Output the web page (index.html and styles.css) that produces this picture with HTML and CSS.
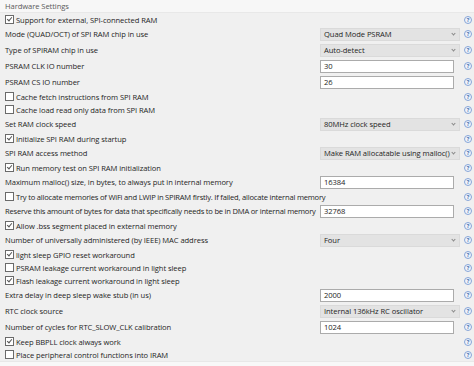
FILE: index.html
```html
<!DOCTYPE html>
<html lang="en">
<head>
  <meta charset="UTF-8" />
  <title>Hardware Settings</title>
  <link rel="stylesheet" href="styles.css">
</head>
<body>
  <div class="panel">
    <div class="header">Hardware Settings</div>

    <div class="row check"><label><span class="box on"></span>Support for external, SPI-connected RAM</label><span class="help">?</span></div>
    <div class="row field"><label>Mode (QUAD/OCT) of SPI RAM chip in use</label><div class="select">Quad Mode PSRAM</div><span class="help">?</span></div>
    <div class="row field"><label>Type of SPIRAM chip in use</label><div class="select">Auto-detect</div><span class="help">?</span></div>
    <div class="row field"><label>PSRAM CLK IO number</label><div class="input">30</div><span class="help">?</span></div>
    <div class="row field"><label>PSRAM CS IO number</label><div class="input">26</div><span class="help">?</span></div>
    <div class="row check"><label><span class="box"></span>Cache fetch instructions from SPI RAM</label><span class="help">?</span></div>
    <div class="row check"><label><span class="box"></span>Cache load read only data from SPI RAM</label><span class="help">?</span></div>
    <div class="row field"><label>Set RAM clock speed</label><div class="select">80MHz clock speed</div><span class="help">?</span></div>
    <div class="row check"><label><span class="box on"></span>Initialize SPI RAM during startup</label><span class="help">?</span></div>
    <div class="row field"><label>SPI RAM access method</label><div class="select">Make RAM allocatable using malloc()</div><span class="help">?</span></div>
    <div class="row check"><label><span class="box on"></span>Run memory test on SPI RAM initialization</label><span class="help">?</span></div>
    <div class="row field"><label>Maximum malloc() size, in bytes, to always put in internal memory</label><div class="input">16384</div><span class="help">?</span></div>
    <div class="row check"><label class="tight"><span class="box"></span>Try to allocate memories of WiFi and LWIP in SPIRAM firstly. If failed, allocate internal memory</label><span class="help">?</span></div>
    <div class="row field"><label class="tight">Reserve this amount of bytes for data that specifically needs to be in DMA or internal memory</label><div class="input">32768</div><span class="help">?</span></div>
    <div class="row check"><label><span class="box on"></span>Allow .bss segment placed in external memory</label><span class="help">?</span></div>
    <div class="row field"><label>Number of universally administered (by IEEE) MAC address</label><div class="select">Four</div><span class="help">?</span></div>
    <div class="row check"><label><span class="box on"></span>light sleep GPIO reset workaround</label><span class="help">?</span></div>
    <div class="row check"><label><span class="box"></span>PSRAM leakage current workaround in light sleep</label><span class="help">?</span></div>
    <div class="row check"><label><span class="box on"></span>Flash leakage current workaround in light sleep</label><span class="help">?</span></div>
    <div class="row field"><label>Extra delay in deep sleep wake stub (in us)</label><div class="input">2000</div><span class="help">?</span></div>
    <div class="row field"><label>RTC clock source</label><div class="select">Internal 136kHz RC oscillator</div><span class="help">?</span></div>
    <div class="row field"><label>Number of cycles for RTC_SLOW_CLK calibration</label><div class="input">1024</div><span class="help">?</span></div>
    <div class="row check"><label><span class="box on"></span>Keep BBPLL clock always work</label><span class="help">?</span></div>
    <div class="row check"><label><span class="box"></span>Place peripheral control functions into IRAM</label><span class="help">?</span></div>

    <div class="footer"></div>
  </div>
</body>
</html>
```
FILE: styles.css
```css
body {
  margin: 0;
  background: #f0f0f0;
  font-family: 'Open Sans', sans-serif;
  font-size: 7.6px;
  letter-spacing: -0.08px;
  color: #1e1e1e;
  overflow: hidden;
}

.panel {
  width: 474px;
  height: 366px;
  display: flex;
  flex-direction: column;
}

.header {
  height: 13px;
  line-height: 12px;
  padding-left: 5px;
  color: #5a5a5a;
  background: #f7f7f7;
  box-sizing: border-box;
  border-bottom: 1px solid #e8e8e8;
}

.row {
  display: flex;
  align-items: center;
  padding-left: 5px;
}

.row.check { height: 13px; }
.row.field { height: 16px; }

.row label {
  flex: 1;
  display: flex;
  align-items: center;
  white-space: nowrap;
  min-width: 0;
}

.row label.tight {
  letter-spacing: -0.22px;
}

.box {
  width: 7px;
  height: 7px;
  border: 1px solid #6a6a6a;
  background: #fff;
  margin-right: 2px;
  position: relative;
  flex: none;
}

.box.on::after {
  content: "";
  position: absolute;
  left: 2px;
  top: 0;
  width: 2px;
  height: 4px;
  border: solid #555;
  border-width: 0 1px 1px 0;
  transform: rotate(40deg);
}

.select,
.input {
  box-sizing: border-box;
  height: 13px;
  line-height: 11px;
  padding-left: 3px;
  flex: none;
  white-space: nowrap;
  overflow: hidden;
}

.select {
  width: 140px;
  background: #e3e3e3;
  border: 1px solid #dadada;
  position: relative;
}

.select::after {
  content: "";
  position: absolute;
  right: 4px;
  top: 3px;
  width: 2px;
  height: 2px;
  border: solid #888;
  border-width: 0 1px 1px 0;
  transform: rotate(45deg);
}

.input {
  width: 134px;
  margin-right: 6px;
  background: #fff;
  border: 1px solid #ababab;
}

.help {
  flex: none;
  width: 6px;
  height: 6px;
  margin: 0 2px 0 4px;
  border: 1px solid #86a5d8;
  border-radius: 50%;
  background: #eef3fb;
  color: #4a70b0;
  font-size: 5.5px;
  font-weight: bold;
  line-height: 6px;
  text-align: center;
  letter-spacing: 0;
}

.footer {
  flex: 1;
  background: #f8f8f8;
  border-top: 1px solid #e8e8e8;
}
```
